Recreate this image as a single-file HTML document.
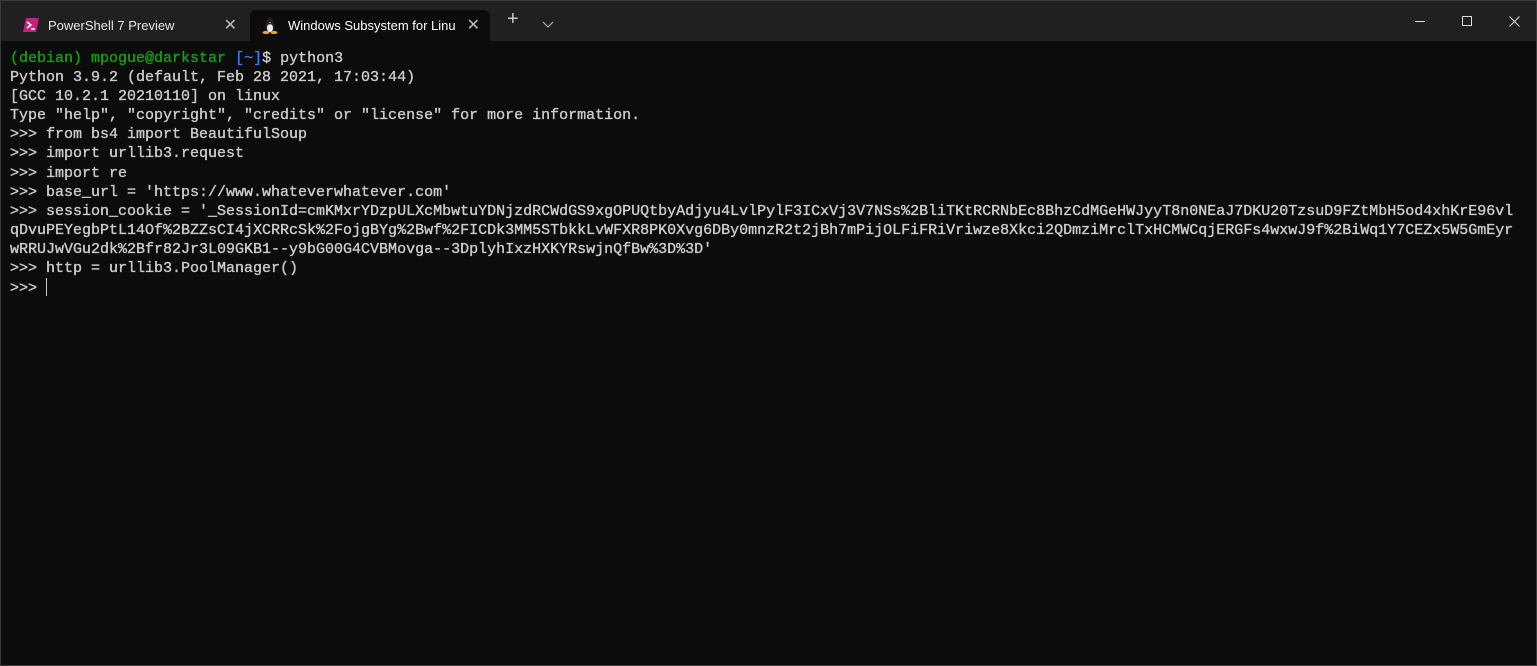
<!DOCTYPE html>
<html><head><meta charset="utf-8"><style>
html,body{margin:0;padding:0;width:1537px;height:666px;overflow:hidden;background:#0c0c0c}
.win{position:absolute;left:0;top:0;width:1535px;height:664px;border:1px solid #3a3a3a;background:#0c0c0c}
.bar{position:absolute;left:0;top:0;width:1535px;height:40px;background:#202020}
.tab{position:absolute;top:9px;height:31px;font:13px "Liberation Sans",sans-serif;color:#fff;line-height:31px}
.t1{left:8px;width:238px;color:#e8e8e8}
.t2{left:249px;width:240px;background:#0c0c0c;border-radius:6px 6px 0 0}
.x{position:absolute;right:10px;top:0;color:#bbb;font-size:16px}
.term{position:absolute;left:9px;top:48px;font:15px/19.1px "Liberation Mono",monospace;color:#cccccc;white-space:pre;-webkit-text-stroke:0.35px currentColor}
.g{color:#13a10e}.b{color:#3b78ff}
.ctl{position:absolute;top:8px;color:#ddd;font:14px "Liberation Sans",sans-serif}
</style></head><body><div class="win">
<div class="bar">
<div class="tab t1"><svg style="position:absolute;left:14px;top:8px" width="16" height="14"><polygon points="3,0 16,0 13,14 0,14" fill="#c2227a"/><path d="M4,4 L8,7 L4,10" stroke="#fff" stroke-width="1.5" fill="none"/><line x1="8" y1="11" x2="12" y2="11" stroke="#fff" stroke-width="1.5"/></svg><span style="position:absolute;left:39px">PowerShell 7 Preview</span><span class="x">✕</span></div>
<div class="tab t2"><svg style="position:absolute;left:12px;top:7px" width="16" height="17"><ellipse cx="8" cy="10" rx="5" ry="6" fill="#222"/><ellipse cx="8" cy="11" rx="3" ry="4" fill="#eee"/><ellipse cx="8" cy="4" rx="3" ry="3.5" fill="#222"/><ellipse cx="4" cy="15.5" rx="3.5" ry="1.6" fill="#e8a818"/><ellipse cx="12" cy="15.5" rx="3.5" ry="1.6" fill="#e8a818"/><path d="M7,5 L9,5 L8,6.5z" fill="#e8a818"/></svg><span style="position:absolute;left:38px;width:168px;overflow:hidden;white-space:nowrap">Windows Subsystem for Linux Preview</span><span class="x">✕</span></div>
<div class="ctl" style="left:506px;top:7px;font-size:20px;color:#ccc">+</div>
<svg style="position:absolute;left:541px;top:20px" width="12" height="7"><path d="M1,1 L6,6 L11,1" stroke="#bbb" fill="none"/></svg>
<svg style="position:absolute;left:1414px;top:20px" width="10" height="1"><rect width="10" height="1" fill="#ddd"/></svg>
<svg style="position:absolute;left:1461px;top:15px" width="11" height="11"><rect x=".5" y=".5" width="9" height="9" stroke="#ddd" fill="none"/></svg>
<svg style="position:absolute;left:1508px;top:15px" width="11" height="11"><path d="M0.5,0.5 L10.5,10.5 M10.5,0.5 L0.5,10.5" stroke="#ddd"/></svg>
</div>
<div class="term"><span class="g">(debian) mpogue@darkstar</span> <span class="b">[~]</span>$ python3
Python 3.9.2 (default, Feb 28 2021, 17:03:44)
[GCC 10.2.1 20210110] on linux
Type "help", "copyright", "credits" or "license" for more information.
&gt;&gt;&gt; from bs4 import BeautifulSoup
&gt;&gt;&gt; import urllib3.request
&gt;&gt;&gt; import re
&gt;&gt;&gt; base_url = 'https://www.whateverwhatever.com'
&gt;&gt;&gt; session_cookie = '_SessionId=cmKMxrYDzpULXcMbwtuYDNjzdRCWdGS9xgOPUQtbyAdjyu4LvlPylF3ICxVj3V7NSs%2BliTKtRCRNbEc8BhzCdMGeHWJyyT8n0NEaJ7DKU20TzsuD9FZtMbH5od4xhKrE96vl
qDvuPEYegbPtL14Of%2BZZsCI4jXCRRcSk%2FojgBYg%2Bwf%2FICDk3MM5STbkkLvWFXR8PK0Xvg6DBy0mnzR2t2jBh7mPijOLFiFRiVriwze8Xkci2QDmziMrclTxHCMWCqjERGFs4wxwJ9f%2BiWq1Y7CEZx5W5GmEyr
wRRUJwVGu2dk%2Bfr82Jr3L09GKB1--y9bG00G4CVBMovga--3DplyhIxzHXKYRswjnQfBw%3D%3D'
&gt;&gt;&gt; http = urllib3.PoolManager()
&gt;&gt;&gt; <span style="display:inline-block;width:1px;height:18px;background:#ccc;vertical-align:-4px;-webkit-text-stroke:0"></span></div>
</div></body></html>
